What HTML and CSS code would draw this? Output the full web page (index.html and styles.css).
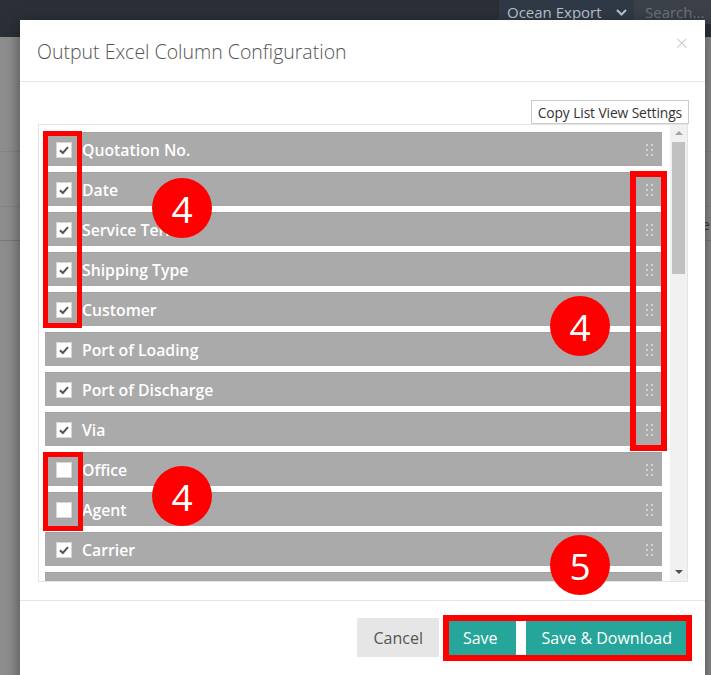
FILE: index.html
```html
<!DOCTYPE html>
<html lang="en">
<head>
<meta charset="UTF-8">
<title>Output Excel Column Configuration</title>
<link rel="stylesheet" href="styles.css">
</head>
<body>

<div class="topbar">
    <div class="module-select">
        <span>Ocean Export</span>
        <svg width="11" height="7" viewBox="0 0 11 7"><polyline points="1,1 5.5,5.5 10,1" fill="none" stroke="#b9c2cc" stroke-width="2"/></svg>
    </div>
    <div class="search">Search...</div>
</div>

<div class="page">
    <div class="page-row page-row-tall"></div>
    <div class="page-row page-row-mid"></div>
    <div class="page-row page-row-dark"><span>Type</span></div>
</div>

<!-- export dialog -->
<div class="modal">
    <div class="modal-header">
        <h4 class="modal-title">Output Excel Column Configuration</h4>
        <span class="close">&times;</span>
    </div>
    <div class="modal-body">
        <div class="copy-row">
            <button class="btn-copy">Copy List View Settings</button>
        </div>
        <div class="column-box">
            <ul class="column-list">
                <li class="column-item">
                    <svg class="check" width="16" height="16" viewBox="0 0 16 16"><rect x="0.5" y="0.5" width="15" height="15" fill="#fff" stroke="#d6d6d6"/><polyline points="4,8.2 6.8,11 12,5.2" fill="none" stroke="#555" stroke-width="2"/></svg>
                    <span class="column-name">Quotation No.</span>
                    <svg class="handle" width="7" height="12" viewBox="0 0 7 12"><g fill="#d2d2d2"><rect x="0" y="0" width="2" height="2"/><rect x="5" y="0" width="2" height="2"/><rect x="0" y="5" width="2" height="2"/><rect x="5" y="5" width="2" height="2"/><rect x="0" y="10" width="2" height="2"/><rect x="5" y="10" width="2" height="2"/></g></svg>
                </li>
                <li class="column-item">
                    <svg class="check" width="16" height="16" viewBox="0 0 16 16"><rect x="0.5" y="0.5" width="15" height="15" fill="#fff" stroke="#d6d6d6"/><polyline points="4,8.2 6.8,11 12,5.2" fill="none" stroke="#555" stroke-width="2"/></svg>
                    <span class="column-name">Date</span>
                    <svg class="handle" width="7" height="12" viewBox="0 0 7 12"><g fill="#d2d2d2"><rect x="0" y="0" width="2" height="2"/><rect x="5" y="0" width="2" height="2"/><rect x="0" y="5" width="2" height="2"/><rect x="5" y="5" width="2" height="2"/><rect x="0" y="10" width="2" height="2"/><rect x="5" y="10" width="2" height="2"/></g></svg>
                </li>
                <li class="column-item">
                    <svg class="check" width="16" height="16" viewBox="0 0 16 16"><rect x="0.5" y="0.5" width="15" height="15" fill="#fff" stroke="#d6d6d6"/><polyline points="4,8.2 6.8,11 12,5.2" fill="none" stroke="#555" stroke-width="2"/></svg>
                    <span class="column-name">Service Term</span>
                    <svg class="handle" width="7" height="12" viewBox="0 0 7 12"><g fill="#d2d2d2"><rect x="0" y="0" width="2" height="2"/><rect x="5" y="0" width="2" height="2"/><rect x="0" y="5" width="2" height="2"/><rect x="5" y="5" width="2" height="2"/><rect x="0" y="10" width="2" height="2"/><rect x="5" y="10" width="2" height="2"/></g></svg>
                </li>
                <li class="column-item">
                    <svg class="check" width="16" height="16" viewBox="0 0 16 16"><rect x="0.5" y="0.5" width="15" height="15" fill="#fff" stroke="#d6d6d6"/><polyline points="4,8.2 6.8,11 12,5.2" fill="none" stroke="#555" stroke-width="2"/></svg>
                    <span class="column-name">Shipping Type</span>
                    <svg class="handle" width="7" height="12" viewBox="0 0 7 12"><g fill="#d2d2d2"><rect x="0" y="0" width="2" height="2"/><rect x="5" y="0" width="2" height="2"/><rect x="0" y="5" width="2" height="2"/><rect x="5" y="5" width="2" height="2"/><rect x="0" y="10" width="2" height="2"/><rect x="5" y="10" width="2" height="2"/></g></svg>
                </li>
                <li class="column-item">
                    <svg class="check" width="16" height="16" viewBox="0 0 16 16"><rect x="0.5" y="0.5" width="15" height="15" fill="#fff" stroke="#d6d6d6"/><polyline points="4,8.2 6.8,11 12,5.2" fill="none" stroke="#555" stroke-width="2"/></svg>
                    <span class="column-name">Customer</span>
                    <svg class="handle" width="7" height="12" viewBox="0 0 7 12"><g fill="#d2d2d2"><rect x="0" y="0" width="2" height="2"/><rect x="5" y="0" width="2" height="2"/><rect x="0" y="5" width="2" height="2"/><rect x="5" y="5" width="2" height="2"/><rect x="0" y="10" width="2" height="2"/><rect x="5" y="10" width="2" height="2"/></g></svg>
                </li>
                <li class="column-item">
                    <svg class="check" width="16" height="16" viewBox="0 0 16 16"><rect x="0.5" y="0.5" width="15" height="15" fill="#fff" stroke="#d6d6d6"/><polyline points="4,8.2 6.8,11 12,5.2" fill="none" stroke="#555" stroke-width="2"/></svg>
                    <span class="column-name">Port of Loading</span>
                    <svg class="handle" width="7" height="12" viewBox="0 0 7 12"><g fill="#d2d2d2"><rect x="0" y="0" width="2" height="2"/><rect x="5" y="0" width="2" height="2"/><rect x="0" y="5" width="2" height="2"/><rect x="5" y="5" width="2" height="2"/><rect x="0" y="10" width="2" height="2"/><rect x="5" y="10" width="2" height="2"/></g></svg>
                </li>
                <li class="column-item">
                    <svg class="check" width="16" height="16" viewBox="0 0 16 16"><rect x="0.5" y="0.5" width="15" height="15" fill="#fff" stroke="#d6d6d6"/><polyline points="4,8.2 6.8,11 12,5.2" fill="none" stroke="#555" stroke-width="2"/></svg>
                    <span class="column-name">Port of Discharge</span>
                    <svg class="handle" width="7" height="12" viewBox="0 0 7 12"><g fill="#d2d2d2"><rect x="0" y="0" width="2" height="2"/><rect x="5" y="0" width="2" height="2"/><rect x="0" y="5" width="2" height="2"/><rect x="5" y="5" width="2" height="2"/><rect x="0" y="10" width="2" height="2"/><rect x="5" y="10" width="2" height="2"/></g></svg>
                </li>
                <li class="column-item">
                    <svg class="check" width="16" height="16" viewBox="0 0 16 16"><rect x="0.5" y="0.5" width="15" height="15" fill="#fff" stroke="#d6d6d6"/><polyline points="4,8.2 6.8,11 12,5.2" fill="none" stroke="#555" stroke-width="2"/></svg>
                    <span class="column-name">Via</span>
                    <svg class="handle" width="7" height="12" viewBox="0 0 7 12"><g fill="#d2d2d2"><rect x="0" y="0" width="2" height="2"/><rect x="5" y="0" width="2" height="2"/><rect x="0" y="5" width="2" height="2"/><rect x="5" y="5" width="2" height="2"/><rect x="0" y="10" width="2" height="2"/><rect x="5" y="10" width="2" height="2"/></g></svg>
                </li>
                <li class="column-item">
                    <svg class="check" width="16" height="16" viewBox="0 0 16 16"><rect x="0.5" y="0.5" width="15" height="15" fill="#fff" stroke="#d6d6d6"/></svg>
                    <span class="column-name">Office</span>
                    <svg class="handle" width="7" height="12" viewBox="0 0 7 12"><g fill="#d2d2d2"><rect x="0" y="0" width="2" height="2"/><rect x="5" y="0" width="2" height="2"/><rect x="0" y="5" width="2" height="2"/><rect x="5" y="5" width="2" height="2"/><rect x="0" y="10" width="2" height="2"/><rect x="5" y="10" width="2" height="2"/></g></svg>
                </li>
                <li class="column-item">
                    <svg class="check" width="16" height="16" viewBox="0 0 16 16"><rect x="0.5" y="0.5" width="15" height="15" fill="#fff" stroke="#d6d6d6"/></svg>
                    <span class="column-name">Agent</span>
                    <svg class="handle" width="7" height="12" viewBox="0 0 7 12"><g fill="#d2d2d2"><rect x="0" y="0" width="2" height="2"/><rect x="5" y="0" width="2" height="2"/><rect x="0" y="5" width="2" height="2"/><rect x="5" y="5" width="2" height="2"/><rect x="0" y="10" width="2" height="2"/><rect x="5" y="10" width="2" height="2"/></g></svg>
                </li>
                <li class="column-item">
                    <svg class="check" width="16" height="16" viewBox="0 0 16 16"><rect x="0.5" y="0.5" width="15" height="15" fill="#fff" stroke="#d6d6d6"/><polyline points="4,8.2 6.8,11 12,5.2" fill="none" stroke="#555" stroke-width="2"/></svg>
                    <span class="column-name">Carrier</span>
                    <svg class="handle" width="7" height="12" viewBox="0 0 7 12"><g fill="#d2d2d2"><rect x="0" y="0" width="2" height="2"/><rect x="5" y="0" width="2" height="2"/><rect x="0" y="5" width="2" height="2"/><rect x="5" y="5" width="2" height="2"/><rect x="0" y="10" width="2" height="2"/><rect x="5" y="10" width="2" height="2"/></g></svg>
                </li>
                <li class="column-item"></li>
            </ul>
            <div class="scrollbar">
                <span class="arrow-up"></span>
                <div class="track"><div class="thumb"></div></div>
                <span class="arrow-down"></span>
            </div>
        </div>
    </div>
    <div class="modal-footer">
        <button class="btn btn-default">Cancel</button>
        <button class="btn btn-primary btn-save">Save</button>
        <button class="btn btn-primary btn-download">Save &amp; Download</button>
    </div>
</div>

<!-- annotations -->
<div class="mark mark-checks-top"></div>
<div class="mark mark-checks-bottom"></div>
<div class="mark mark-handles"></div>
<div class="mark mark-buttons"></div>
<div class="step step-a">4</div>
<div class="step step-b">4</div>
<div class="step step-c">4</div>
<div class="step step-d">5</div>

</body>
</html>
```

FILE: styles.css
```css
body {
    margin: 0;
    width: 711px;
    height: 675px;
    overflow: hidden;
    position: relative;
    background: #8e8e8e;
    font-family: "Open Sans", "Liberation Sans", sans-serif;
}

/* page behind the dialog */
.topbar {
    height: 37px;
    background: #2b3038;
    display: flex;
    justify-content: flex-end;
    align-items: flex-start;
}

.module-select {
    width: 135px;
    height: 24px;
    box-sizing: border-box;
    padding: 0 7px 0 8px;
    background: #303a47;
    color: #b9c2cc;
    font-size: 15px;
    display: flex;
    align-items: center;
    justify-content: space-between;
}

.search {
    width: 77px;
    height: 24px;
    box-sizing: border-box;
    padding-left: 11px;
    background: #3b4049;
    color: #6c737d;
    font-size: 15px;
    line-height: 24px;
}

.page-row {
    border-bottom: 1px solid #858585;
}

.page-row-tall {
    height: 114px;
}

.page-row-mid {
    height: 54px;
}

.page-row-dark {
    height: 33px;
    border-bottom-color: #7a7a7a;
    display: flex;
    align-items: center;
    justify-content: flex-end;
    padding-right: 1px;
    color: #3c3c3c;
    font-size: 15px;
}

/* dialog */
.modal {
    position: absolute;
    left: 20px;
    top: 20px;
    width: 685px;
    background: #fff;
    box-shadow: 0 5px 15px rgba(0, 0, 0, 0.5);
}

.modal-header {
    height: 62px;
    box-sizing: border-box;
    border-bottom: 1px solid #e5e5e5;
    padding: 0 17px 0 17px;
    display: flex;
    align-items: center;
    justify-content: space-between;
}

.modal-title {
    margin: 0 0 0 0;
    padding-top: 2px;
    font-size: 19.5px;
    font-weight: 300;
    color: #555;
}

.close {
    font-size: 22px;
    font-weight: 300;
    color: #c8c8c8;
    margin-top: -18px;
}

.modal-body {
    padding: 18px 17px 18px 18px;
}

.copy-row {
    display: flex;
    justify-content: flex-end;
}

.btn-copy {
    height: 24px;
    padding: 0 6px;
    margin-right: -1px;
    background: #fff;
    border: 1px solid #ccc;
    color: #333;
    font-family: inherit;
    font-size: 13.8px;
    letter-spacing: -0.1px;
}

.column-box {
    height: 458px;
    box-sizing: border-box;
    border: 1px solid #e5e5e5;
    display: flex;
    overflow: hidden;
}

.column-list {
    flex: 1;
    list-style: none;
    margin: 0;
    padding: 7px 8px 0 6px;
    display: flex;
    flex-direction: column;
    gap: 6px;
}

.column-item {
    flex: none;
    height: 34px;
    box-sizing: border-box;
    background: #aaa;
    border-top: 1px solid #a1a1a1;
    display: flex;
    align-items: center;
    padding: 0 9px 0 11px;
}

.check {
    flex: none;
}

.column-name {
    flex: 1;
    margin-left: 10px;
    color: #fff;
    font-size: 15.8px;
    font-weight: 600;
}

.handle {
    flex: none;
}

.scrollbar {
    width: 17px;
    background: #f1f1f1;
    display: flex;
    flex-direction: column;
    align-items: center;
}

.arrow-up, .arrow-down {
    width: 0;
    height: 0;
    border-left: 4px solid transparent;
    border-right: 4px solid transparent;
}

.arrow-up {
    margin-top: 6px;
    border-bottom: 4px solid #a3a3a3;
}

.arrow-down {
    margin-bottom: 7px;
    border-top: 4px solid #505050;
}

.track {
    flex: 1;
    width: 100%;
    padding: 7px 2px 0 2px;
    box-sizing: border-box;
}

.thumb {
    height: 132px;
    background: #c1c1c1;
}

.modal-footer {
    border-top: 1px solid #e5e5e5;
    padding: 17px 17px 30px 18px;
    display: flex;
    justify-content: flex-end;
}

.btn {
    height: 39px;
    border: none;
    font-family: inherit;
    font-size: 16px;
    padding: 0 16px;
}

.btn-default {
    background: #e6e6e6;
    color: #555;
}

.btn-primary {
    background: #26a69a;
    color: #fff;
}

.btn-save {
    margin-left: 5px;
    padding: 0 18px 0 19px;
}

.btn-download {
    margin-left: 10px;
}

/* red annotations */
.mark {
    position: absolute;
    box-sizing: border-box;
    border: 5px solid #f00;
}

.mark-checks-top {
    left: 43px;
    top: 131px;
    width: 39px;
    height: 197px;
}

.mark-checks-bottom {
    left: 43px;
    top: 452px;
    width: 40px;
    height: 79px;
}

.mark-handles {
    left: 630px;
    top: 171px;
    width: 37px;
    height: 280px;
    border-width: 6px;
}

.mark-buttons {
    left: 443px;
    top: 615px;
    width: 249px;
    height: 46px;
    border-width: 6px;
}

.step {
    position: absolute;
    width: 60px;
    height: 60px;
    border-radius: 50%;
    background: #f00;
    color: #fff;
    font-size: 37px;
    display: flex;
    align-items: center;
    justify-content: center;
}

.step-a { left: 152px; top: 178px; }
.step-b { left: 550px; top: 296px; }
.step-c { left: 152px; top: 466px; }
.step-d { left: 550px; top: 535px; }
```
